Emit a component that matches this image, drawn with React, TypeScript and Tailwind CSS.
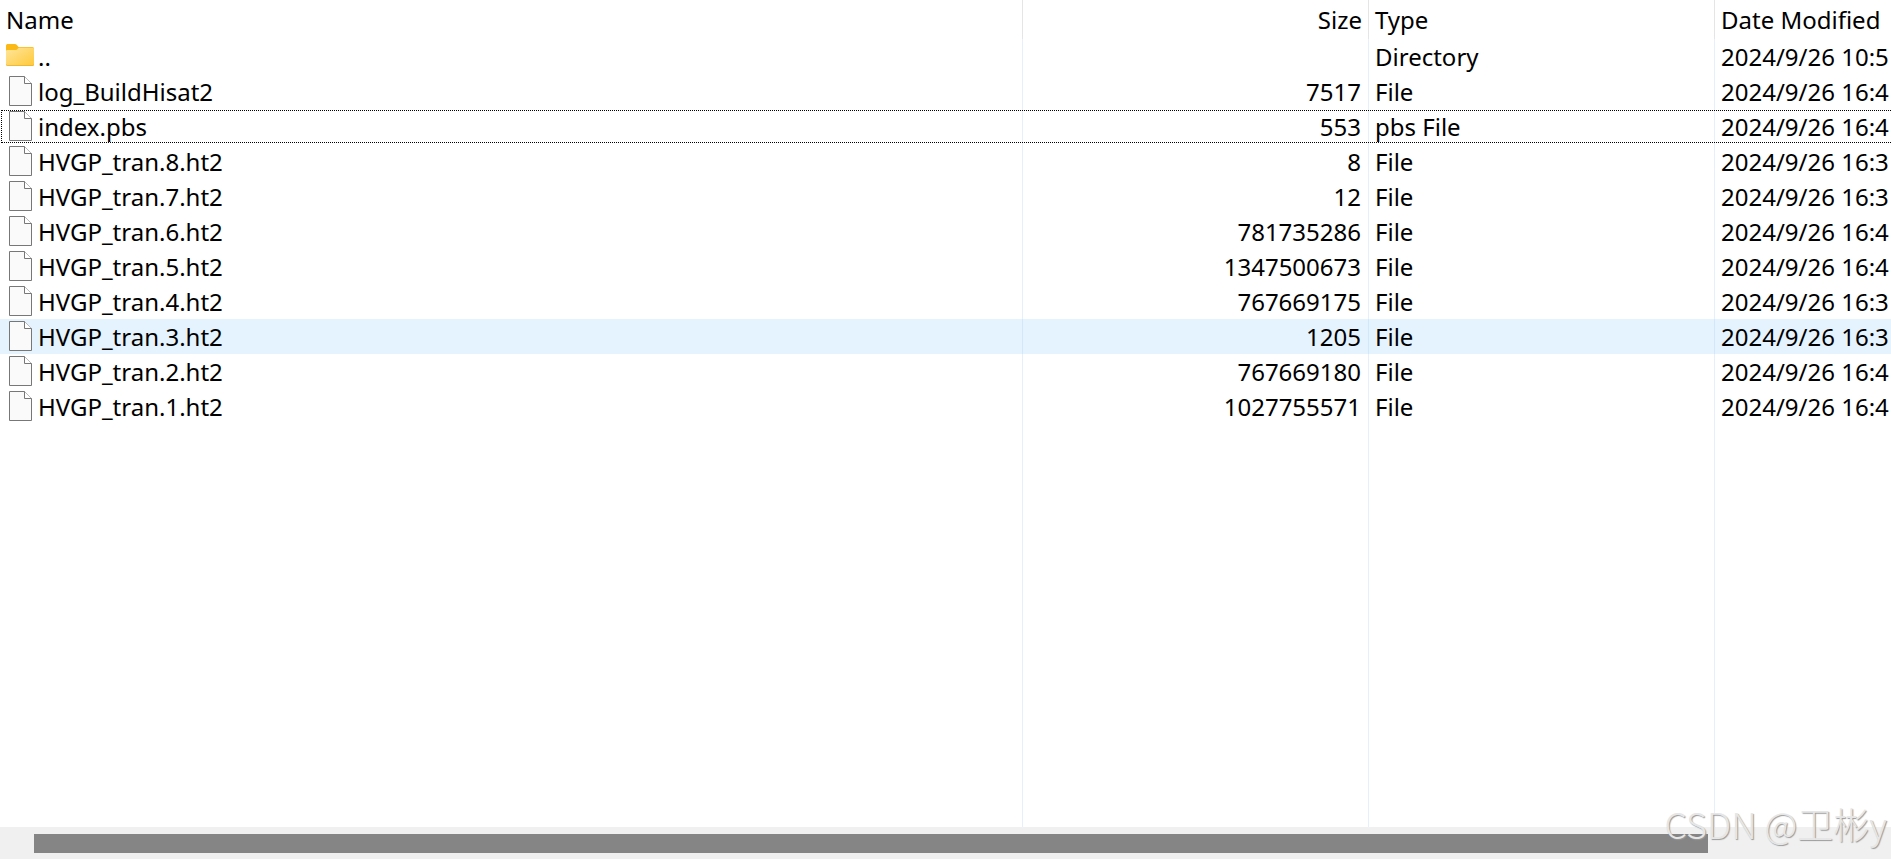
type Entry = {
  name: string;
  size: string;
  type: string;
  modified: string;
  focused?: boolean;
  hovered?: boolean;
};

const entries: Entry[] = [
  { name: "..", size: "", type: "Directory", modified: "2024/9/26 10:5" },
  { name: "log_BuildHisat2", size: "7517", type: "File", modified: "2024/9/26 16:4" },
  { name: "index.pbs", size: "553", type: "pbs File", modified: "2024/9/26 16:4", focused: true },
  { name: "HVGP_tran.8.ht2", size: "8", type: "File", modified: "2024/9/26 16:3" },
  { name: "HVGP_tran.7.ht2", size: "12", type: "File", modified: "2024/9/26 16:3" },
  { name: "HVGP_tran.6.ht2", size: "781735286", type: "File", modified: "2024/9/26 16:4" },
  { name: "HVGP_tran.5.ht2", size: "1347500673", type: "File", modified: "2024/9/26 16:4" },
  { name: "HVGP_tran.4.ht2", size: "767669175", type: "File", modified: "2024/9/26 16:3" },
  { name: "HVGP_tran.3.ht2", size: "1205", type: "File", modified: "2024/9/26 16:3", hovered: true },
  { name: "HVGP_tran.2.ht2", size: "767669180", type: "File", modified: "2024/9/26 16:4" },
  { name: "HVGP_tran.1.ht2", size: "1027755571", type: "File", modified: "2024/9/26 16:4" },
];

function FolderIcon() {
  return (
    <svg viewBox="0 0 28 22" className="w-7 h-[22px] mb-[3px] shrink-0" aria-hidden="true">
      <defs>
        <linearGradient id="folder" x1="0" y1="0" x2="1" y2="1">
          <stop offset="0" stopColor="#ffe69c" />
          <stop offset="1" stopColor="#ffc937" />
        </linearGradient>
      </defs>
      <path d="M0 1.5Q0 0 1.5 0H9q1 0 1.700.7L12.500 3H26.500Q28 3 28 4.500V12H0Z" fill="#fbb917" />
      <path
        d="M0 7.200Q0 6 1.200 6H9.500q.8 0 1.500-.6L12.200 4.300q.5-.5 1.300-.5H26.800Q28 3.800 28 5V20.500Q28 22 26.500 22H1.500Q0 22 0 20.500Z"
        fill="url(#folder)"
      />
      <path d="M.3 20.500q.2 1.100 1.200 1.100h25q1 0 1.200-1.100" fill="none" stroke="#e8ad2c" strokeWidth="0.8" />
    </svg>
  );
}

function FileIcon() {
  return (
    <svg viewBox="0 0 23 30" className="w-[23px] h-[30px] mb-px shrink-0" aria-hidden="true">
      <path d="M.5.5H15.500L22.500 7.500V29.500H.5Z" fill="#fafafa" stroke="#777" />
      <path d="M15.500.5V7.500H22.500" fill="#fff" stroke="#777" />
    </svg>
  );
}

function Row({ entry }: { entry: Entry }) {
  const isFolder = entry.name === "..";
  const line = entry.hovered ? "border-[#d1e7fc]" : "border-[#e6f0fc]";

  return (
    <tr className={`relative h-[35px] ${entry.hovered ? "bg-[#e5f3ff]" : ""}`}>
      <td className={`border-r p-0 ${line}`}>
        <div className={`flex items-center h-[35px] ${isFolder ? "pl-1.5 gap-1" : "pl-[9px] gap-1.5"}`}>
          {isFolder ? <FolderIcon /> : <FileIcon />}
          <span>{entry.name}</span>
        </div>
        {/* Keyboard focus rectangle */}
        {entry.focused && (
          <span className="absolute left-px right-0 inset-y-px border-y border-l border-dotted border-black pointer-events-none" />
        )}
      </td>
      <td className={`border-r p-0 pr-[7px] text-right ${line}`}>{entry.size}</td>
      <td className={`border-r p-0 pl-1.5 ${line}`}>{entry.type}</td>
      <td className="p-0 pl-1.5 overflow-hidden">{entry.modified}</td>
    </tr>
  );
}

export default function App() {
  return (
    <div className="relative flex flex-col h-screen overflow-hidden bg-white text-black text-2xl leading-[35px] font-['Noto_Sans',sans-serif]">
      <table className="w-full table-fixed border-separate border-spacing-0 whitespace-nowrap leading-[35px]">
        <colgroup>
          <col />
          <col className="w-[346px]" />
          <col className="w-[346px]" />
          <col className="w-44" />
        </colgroup>
        <thead>
          <tr className="h-[39px] text-left">
            <th className="border-r border-[#e5e5e5] p-0 pl-1.5 font-normal">Name</th>
            <th className="border-r border-[#e5e5e5] p-0 pr-1.5 font-normal text-right">Size</th>
            <th className="border-r border-[#e5e5e5] p-0 pl-1.5 font-normal">Type</th>
            <th className="p-0 pl-1.5 font-normal">Date Modified</th>
          </tr>
        </thead>
        <tbody>
          {entries.map((entry) => (
            <Row key={entry.name} entry={entry} />
          ))}
        </tbody>
      </table>

      {/* Column lines under the last row */}
      <div className="flex-1 grid grid-cols-[1fr_346px_346px_176px]">
        <div className="border-r border-[#e6f0fc]" />
        <div className="border-r border-[#e6f0fc]" />
        <div className="border-r border-[#e6f0fc]" />
      </div>

      {/* Horizontal scrollbar */}
      <div className="flex items-center h-8 px-[34px] bg-[#f0f0f0]">
        <div className="w-[91.8%] h-[19px] bg-[#858585]" />
      </div>

      {/* Watermark */}
      <div className="absolute right-1 bottom-2.5 text-4xl leading-[52px] font-light text-[#e6e6e6] [text-shadow:1px_1px_1px_#999] font-['Noto_Sans_CJK_SC',sans-serif] pointer-events-none">
        CSDN @卫彬y
      </div>
    </div>
  );
}
